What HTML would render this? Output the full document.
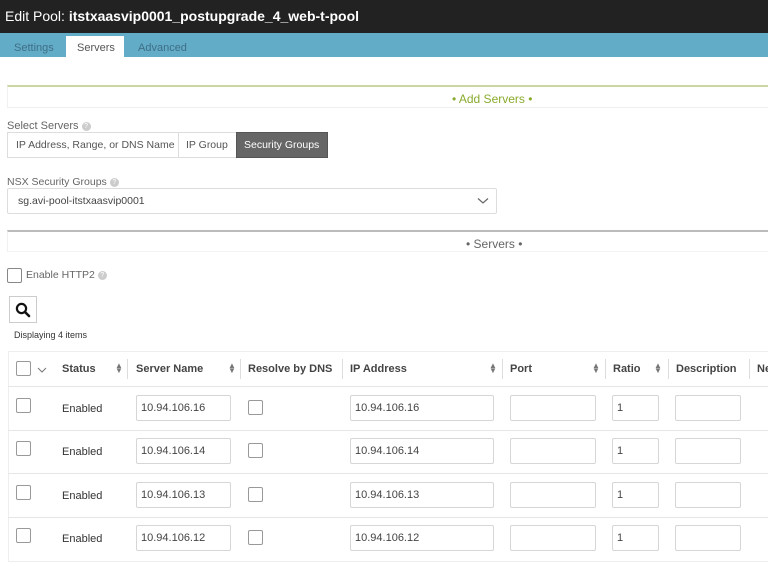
<!DOCTYPE html>
<html><head><style>
*{margin:0;padding:0;box-sizing:border-box}
body{width:768px;height:566px;overflow:hidden;background:#fff;font-family:"Liberation Sans",sans-serif;position:relative;color:#333}
.a{position:absolute;white-space:nowrap}
.inp{position:absolute;border:1px solid #d6d6d6;border-radius:2px;background:#fff;font-size:11px;color:#444;padding-left:4px;line-height:24px}
.cb{position:absolute;border:1px solid #999;border-radius:2px;background:#fff}
.h{position:absolute;font-size:11px;font-weight:bold;color:#444;top:363px}
.dv{position:absolute;top:359px;height:20px;border-left:1px solid #ddd}
.srt{position:absolute;top:363px;font-size:8px;color:#777;line-height:5px}
.q{display:inline-block;width:9px;height:9px;border-radius:50%;background:#ccc;color:#fff;font-size:7px;text-align:center;line-height:9px;vertical-align:1px;margin-left:3px}
</style></head><body>
<div class="a" style="left:0;top:0;width:768px;height:33px;background:#222"></div>
<div class="a" style="left:5px;top:8px;font-size:14px;color:#fff">Edit Pool: <span style="font-weight:bold">itstxaasvip0001_postupgrade_4_web-t-pool</span></div>
<div class="a" style="left:0;top:33px;width:768px;height:24px;background:#62acc8"></div>
<div class="a" style="left:66px;top:36px;width:58px;height:21px;background:#fff"></div>
<div class="a" style="left:14px;top:42px;font-size:11px;color:#3f6f85">Settings</div>
<div class="a" style="left:77px;top:42px;font-size:11px;color:#555">Servers</div>
<div class="a" style="left:138px;top:42px;font-size:11px;color:#3f6f85">Advanced</div>

<div class="a" style="left:7px;top:85px;width:761px;height:23px;border-top:2px solid #cbd6a3;border-left:1px solid #f0f0f0;border-bottom:1px solid #f0f0f0"></div>
<div class="a" style="left:452px;top:92px;font-size:12px;color:#8aab2e">• Add Servers •</div>

<div class="a" style="left:7px;top:120px;font-size:11px;color:#666">Select Servers<span class="q">?</span></div>
<div class="a" style="left:7px;top:132px;width:172px;height:26px;border:1px solid #ddd;font-size:10.5px;color:#555;line-height:24px;padding-left:8px">IP Address, Range, or DNS Name</div>
<div class="a" style="left:178px;top:132px;width:59px;height:26px;border:1px solid #ddd;font-size:10.5px;color:#555;line-height:24px;padding-left:7px">IP Group</div>
<div class="a" style="left:236px;top:132px;width:92px;height:26px;background:#666;border:1px solid #555;font-size:10.5px;color:#fff;line-height:24px;padding-left:7px">Security Groups</div>

<div class="a" style="left:7px;top:176px;font-size:10.5px;color:#666">NSX Security Groups<span class="q">?</span></div>
<div class="a" style="left:7px;top:188px;width:490px;height:26px;border:1px solid #ddd;border-radius:2px;font-size:10.5px;color:#444;line-height:24px;padding-left:10px">sg.avi-pool-itstxaasvip0001</div>
<svg class="a" style="left:477px;top:197px" width="12" height="8"><path d="M1 1.5L6 6L11 1.5" stroke="#666" fill="none" stroke-width="1.2"/></svg>

<div class="a" style="left:7px;top:230px;width:761px;height:22px;border-top:2px solid #bbb;border-left:1px solid #f0f0f0;border-bottom:1px solid #f4f4f4"></div>
<div class="a" style="left:466px;top:237px;font-size:12px;color:#666">• Servers •</div>

<div class="cb" style="left:7px;top:268px;width:15px;height:15px;border-color:#888"></div>
<div class="a" style="left:26px;top:269px;font-size:10.5px;color:#666">Enable HTTP2<span class="q">?</span></div>

<div class="a" style="left:9px;top:296px;width:28px;height:27px;border:1px solid #ccc;background:#fff"></div>
<svg class="a" style="left:15px;top:302px" width="16" height="16"><circle cx="6.5" cy="6.5" r="4.6" stroke="#111" stroke-width="2.2" fill="none"/><path d="M10 10L14 14" stroke="#111" stroke-width="2.6" stroke-linecap="round"/></svg>
<div class="a" style="left:14px;top:330px;font-size:9px;color:#333">Displaying 4 items</div>

<div class="a" style="left:8px;top:351px;width:770px;height:211px;border:1px solid #eee"></div>
<div class="a" style="left:8px;top:386px;width:760px;border-top:1px solid #e6e6e6"></div>
<div class="a" style="left:8px;top:430px;width:760px;border-top:1px solid #e6e6e6"></div>
<div class="a" style="left:8px;top:473px;width:760px;border-top:1px solid #e6e6e6"></div>
<div class="a" style="left:8px;top:517px;width:760px;border-top:1px solid #e6e6e6"></div>

<div class="cb" style="left:16px;top:361px;width:15px;height:15px"></div>
<svg class="a" style="left:37px;top:367px" width="10" height="7"><path d="M1 1L5 5L9 1" stroke="#777" fill="none"/></svg>
<div class="h" style="left:62px">Status</div><div class="srt" style="left:115px">▲<br>▼</div><div class="dv" style="left:127px"></div>
<div class="h" style="left:136px">Server Name</div><div class="srt" style="left:228px">▲<br>▼</div><div class="dv" style="left:240px"></div>
<div class="h" style="left:248px">Resolve by DNS</div><div class="dv" style="left:342px"></div>
<div class="h" style="left:350px">IP Address</div><div class="srt" style="left:489px">▲<br>▼</div><div class="dv" style="left:502px"></div>
<div class="h" style="left:510px">Port</div><div class="srt" style="left:592px">▲<br>▼</div><div class="dv" style="left:605px"></div>
<div class="h" style="left:613px">Ratio</div><div class="srt" style="left:654px">▲<br>▼</div><div class="dv" style="left:668px"></div>
<div class="h" style="left:676px">Description</div><div class="dv" style="left:749px"></div>
<div class="h" style="left:757px">Ne</div>

<div id="rows"></div>
<script>
var ips=["10.94.106.16","10.94.106.14","10.94.106.13","10.94.106.12"],t=[395,438,482,525],h="";
for(var i=0;i<4;i++){var y=t[i];
h+='<div class="cb" style="left:16px;top:'+(y+3)+'px;width:15px;height:15px"></div>';
h+='<div class="a" style="left:62px;top:'+(y+8)+'px;font-size:11px;color:#333">Enabled</div>';
h+='<div class="inp" style="left:136px;top:'+y+'px;width:95px;height:26px">'+ips[i]+'</div>';
h+='<div class="cb" style="left:248px;top:'+(y+5)+'px;width:15px;height:15px"></div>';
h+='<div class="inp" style="left:350px;top:'+y+'px;width:144px;height:26px">'+ips[i]+'</div>';
h+='<div class="inp" style="left:510px;top:'+y+'px;width:86px;height:26px"></div>';
h+='<div class="inp" style="left:612px;top:'+y+'px;width:47px;height:26px">1</div>';
h+='<div class="inp" style="left:675px;top:'+y+'px;width:66px;height:26px"></div>';}
document.getElementById("rows").innerHTML=h;
</script>
</body></html>
